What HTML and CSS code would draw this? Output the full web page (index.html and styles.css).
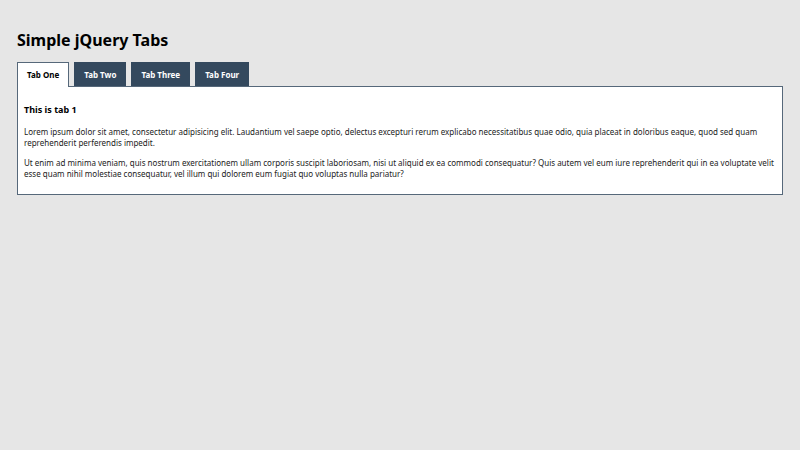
FILE: index.html
```html
<!DOCTYPE html>
<html lang="en">
<head>
  <meta charset="UTF-8">
  <meta name="viewport" content="width=device-width, initial-scale=1.0">
  <title>Simple jQuery Tabs</title>
  <link rel="stylesheet" href="styles.css">
</head>
<body>
  <div class="wrapper">
    <h1 class="title">Simple jQuery Tabs</h1>
    <ul class="tabs">
      <li><a class="tab active" href="#tab1">Tab One</a></li>
      <li><a class="tab" href="#tab2">Tab Two</a></li>
      <li><a class="tab" href="#tab3">Tab Three</a></li>
      <li><a class="tab" href="#tab4">Tab Four</a></li>
    </ul>
    <div class="tab-content" id="tab1">
      <h3 class="tab-heading">This is tab 1</h3>
      <p>Lorem ipsum dolor sit amet, consectetur adipisicing elit. Laudantium vel saepe optio, delectus excepturi rerum explicabo necessitatibus quae odio, quia placeat in doloribus eaque, quod sed quam reprehenderit perferendis impedit.</p>
      <p>Ut enim ad minima veniam, quis nostrum exercitationem ullam corporis suscipit laboriosam, nisi ut aliquid ex ea commodi consequatur? Quis autem vel eum iure reprehenderit qui in ea voluptate velit esse quam nihil molestiae consequatur, vel illum qui dolorem eum fugiat quo voluptas nulla pariatur?</p>
    </div>
  </div>
</body>
</html>
```
FILE: styles.css
```css
body {
  margin: 0;
  padding: 30px 17px;
  background: #e6e6e6;
  color: #222;
  font-family: "Noto Sans", sans-serif;
  font-size: 8px;
  line-height: 11px;
}
.title {
  margin: 0 0 12px;
  color: #000;
  font-size: 16px;
  line-height: 20px;
}
.tabs {
  display: flex;
  gap: 5px;
  margin: 0;
  padding: 0;
  list-style: none;
}
.tab {
  display: block;
  padding: 6px 9px 5px;
  border: 1px solid #34495e;
  border-bottom: 0;
  background: #34495e;
  color: #fff;
  font-weight: bold;
  line-height: 12px;
  text-decoration: none;
}
/* the open tab runs over the top border of the panel */
.tab.active {
  margin-bottom: -1px;
  padding-bottom: 6px;
  border-color: #56687a;
  background: #fff;
  color: #000;
}
.tab-content {
  padding: 16px 4px 15px 6px;
  border: 1px solid #56687a;
  background: #fff;
}
.tab-content p {
  margin: 0 0 9px;
}
.tab-content p:last-child {
  margin-bottom: 0;
}
.tab-heading {
  margin: 0 0 9px;
  color: #000;
  font-size: 9px;
  line-height: 14px;
}
```
